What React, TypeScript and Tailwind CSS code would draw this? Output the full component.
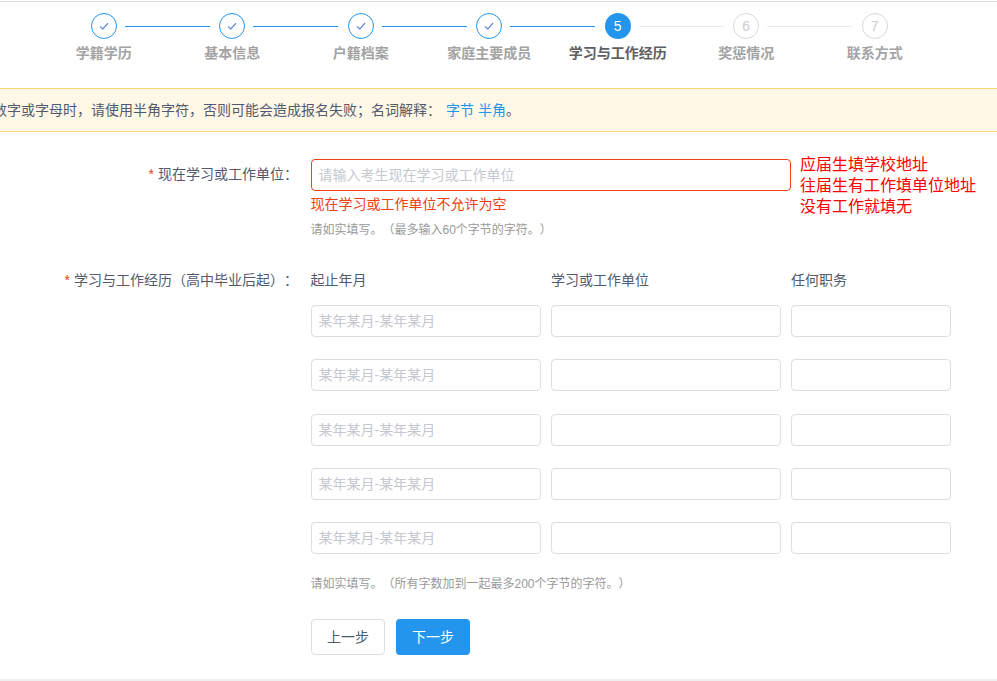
const font = '[font-family:"Liberation_Sans","Noto_Sans_CJK_SC",sans-serif]';

const steps = ["学籍学历", "基本信息", "户籍档案", "家庭主要成员", "学习与工作经历", "奖惩情况", "联系方式"];
const CURRENT = 4;

function Check() {
  return (
    <svg width="12" height="12" viewBox="0 0 12 12" fill="none" stroke="#5b7fdc" strokeWidth="1.2">
      <path d="M2 6.4 L4.8 9 L10 3.2" />
    </svg>
  );
}

function Step({ index, label }: { index: number; label: string }) {
  const done = index < CURRENT;
  const current = index === CURRENT;
  return (
    <div className="relative flex w-[128.5px] shrink-0 flex-col items-center">
      {index < steps.length - 1 && (
        <div
          className={
            done
              ? "absolute left-[85px] top-[13px] h-px w-[85px] bg-[#2395ec]"
              : "absolute left-[85px] top-[13px] h-px w-[85px] bg-[#e8eaec]"
          }
        />
      )}
      <div
        className={
          done
            ? "flex h-[26px] w-[26px] items-center justify-center rounded-full border border-[#2395ec] bg-white"
            : current
              ? "flex h-[26px] w-[26px] items-center justify-center rounded-full bg-[#2395ec] text-[14px] text-white"
              : "flex h-[26px] w-[26px] items-center justify-center rounded-full border border-[#d8d8d8] bg-white text-[14px] text-[#cccccc]"
        }
      >
        {done ? <Check /> : index + 1}
      </div>
      <div
        className={
          current
            ? "mt-[4px] whitespace-nowrap text-[14px] leading-[20px] font-bold text-[#5f5f5f]"
            : "mt-[4px] whitespace-nowrap text-[14px] leading-[20px] font-bold text-[#a3a3a3]"
        }
      >
        {label}
      </div>
    </div>
  );
}

function Field({ width, placeholder }: { width: string; placeholder?: string }) {
  return (
    <input
      placeholder={placeholder}
      className={`${width} h-[32px] rounded-[4px] border border-[#dcdee2] bg-white px-[6.5px] text-[14px] outline-none placeholder:text-[#c5c8ce]`}
    />
  );
}

export default function App() {
  return (
    <div className={`${font} h-[681px] w-[997px] overflow-hidden bg-white text-[14px] text-[#515a6e] [text-spacing-trim:space-all]`}>
      <div className="mt-px h-px bg-[#e0e0e0]" />
      <div className="ml-[39.5px] mt-[11px] flex h-[75px]">
        {steps.map((s, i) => (
          <Step key={s} index={i} label={s} />
        ))}
      </div>
      <div className="flex h-[44px] items-center overflow-hidden whitespace-nowrap border-y border-[#ffd77a] bg-[#fff8e6] text-[#515a6e]">
        <span className="-ml-[35px]">
          填写数字或字母时，请使用半角字符，否则可能会造成报名失败；名词解释：
          <span className="ml-[5px] text-[#2395ec]">字节 半角</span>。
        </span>
      </div>

      <div className="mt-[27px] flex">
        <div className="w-[298px] shrink-0 pt-[5px] text-right leading-[20px]">
          <span className="mr-[4px] text-[#ed4014]">*</span>现在学习或工作单位：
        </div>
        <div className="ml-[13px] w-[480px] shrink-0">
          <input
            placeholder="请输入考生现在学习或工作单位"
            className="block h-[32px] w-[480px] rounded-[4px] border border-[#ed4014] bg-white px-[6.5px] text-[14px] outline-none placeholder:text-[#c5c8ce]"
          />
          <div className="-ml-[0.5px] mt-[3px] leading-[20px] text-[#ed4014]">现在学习或工作单位不允许为空</div>
          <div className="-ml-[0.5px] mt-[6px] text-[12px] leading-[20px] text-[#999999]">请如实填写。（最多输入60个字节的字符。）</div>
        </div>
        <div className="ml-[9px] -mt-[5px] whitespace-nowrap text-[16px] leading-[21px] text-[#ff0000]">
          应届生填学校地址
          <br />
          往届生有工作填单位地址
          <br />
          没有工作就填无
        </div>
      </div>

      <div className="mt-[30px] flex">
        <div className="w-[298px] shrink-0 text-right leading-[20px] whitespace-nowrap">
          <span className="mr-[4px] text-[#ed4014]">*</span>学习与工作经历（高中毕业后起）：
        </div>
        <div className="ml-[13px] w-[640px]">
          <div className="flex gap-[10px] leading-[20px]">
            <div className="-ml-[0.5px] w-[230.5px]">起止年月</div>
            <div className="w-[230px]">学习或工作单位</div>
            <div className="w-[160px]">任何职务</div>
          </div>
          <div className="mt-[15px] flex flex-col gap-[22.25px]">
            {[0, 1, 2, 3, 4].map((r) => (
              <div key={r} className="flex gap-[10px]">
                <Field width="w-[230px]" placeholder="某年某月-某年某月" />
                <Field width="w-[230px]" />
                <Field width="w-[160px]" />
              </div>
            ))}
          </div>
          <div className="-ml-[0.5px] mt-[20px] text-[12px] leading-[20px] text-[#999999]">请如实填写。（所有字数加到一起最多200个字节的字符。）</div>
          <div className="mt-[25px] flex gap-[11px]">
            <button className="h-[36px] w-[74px] rounded-[4px] border border-[#dcdee2] bg-white text-[14px] text-[#515a6e]">上一步</button>
            <button className="h-[36px] w-[74px] rounded-[4px] bg-[#2395ec] text-[14px] text-white">下一步</button>
          </div>
        </div>
      </div>
      <div className="mt-[24px] h-[2px] bg-[#f0f0f0]" />
    </div>
  );
}
